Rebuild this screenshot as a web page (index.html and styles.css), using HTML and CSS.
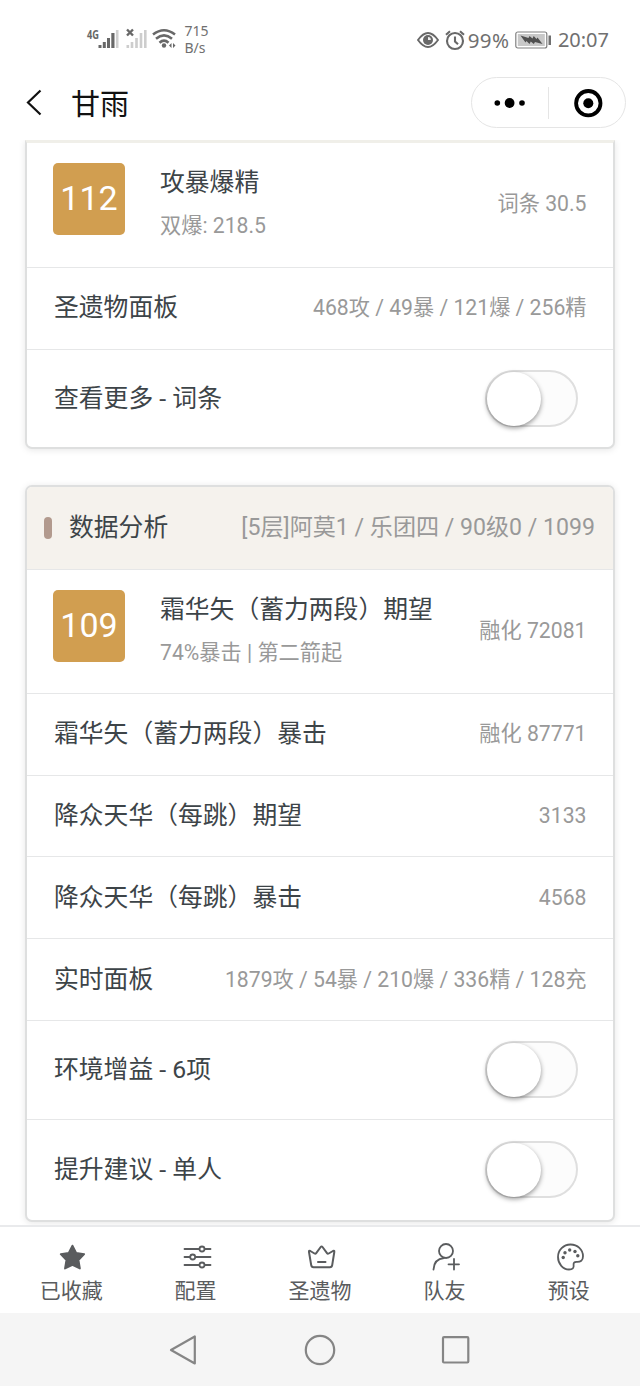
FILE: index.html
```html
<!DOCTYPE html>
<html lang="zh-CN">
<head>
<meta charset="utf-8">
<title>甘雨</title>
<link rel="stylesheet" href="styles.css">
</head>
<body>
<div class="screen">
  <header class="status">
    <svg class="signals" width="92" height="26" viewBox="0 0 92 26">
      <text class="net" x="0" y="11.500" textLength="12" lengthAdjust="spacingAndGlyphs">4G</text>
      <g fill="#686868"><rect x="11.500" y="18" width="3" height="3"/><rect x="15.800" y="15" width="3" height="6"/><rect x="20" y="11" width="3" height="10"/><rect x="24.300" y="6" width="3.200" height="15"/></g>
      <rect x="28.900" y="3" width="2.600" height="18" fill="#d0d0d0"/>
      <g fill="#cdcdcd"><rect x="39.500" y="18" width="2.600" height="3"/><rect x="43.700" y="15" width="2.600" height="6"/><rect x="48.200" y="11" width="2.600" height="10"/><rect x="52.700" y="6" width="2.600" height="15"/><rect x="57" y="3" width="2.600" height="18"/></g>
      <path d="M40 2.500l6 6M46 2.500l-6 6" stroke="#686868" stroke-width="2.400"/>
      <g fill="none" stroke="#686868" stroke-width="2.600"><path d="M66 7.500q11-8.500 22 0"/><path d="M69 11.700q8-6.500 16 0"/><path d="M72.500 15.700q4.500-4 9 0"/></g>
      <circle cx="77" cy="18.500" r="2.200" fill="#686868"/>
      <path d="M84.500 16v5L82 18.500zM86 16v5l2.500-2.500z" fill="#686868"/>
    </svg>
    <div class="speed"><span>715</span><span>B/s</span></div>
    <div class="status-right">
      <svg width="22" height="18" viewBox="0 0 22 18"><path d="M1 9Q11-5 21 9Q11 23 1 9Z" fill="none" stroke="#686868" stroke-width="1.900"/><circle cx="11" cy="9" r="5" fill="#686868"/><path d="M11 9V6A2.800 2.800 0 0 1 13.800 9z" fill="#eee"/></svg>
      <svg class="alarm" width="20" height="21" viewBox="0 0 20 21"><g fill="none" stroke="#686868" stroke-width="2.100"><circle cx="10" cy="11" r="8"/><path d="M10 6.500v5l3 2.800M1 4.800L5 1.300M19 4.800L15 1.300"/></g></svg>
      <span class="percent">99%</span>
      <svg class="battery" width="37" height="18" viewBox="0 0 37 18"><rect x=".8" y="1" width="31" height="16" rx="2" fill="#fff" stroke="#808080" stroke-width="1.200"/><rect x="2.800" y="3" width="27" height="12" fill="#c8c8c8"/><rect x="33.500" y="4.500" width="2.500" height="9.500" fill="#707070"/><path d="M5.500 4.500l8 2.500 1-2 3 2.500 1.200-2.500 2.800 3 1-1.500 5 6.500-7.500-2-1.200 2-3-2.500-1.300 2.500-3-3-1 1.500z" fill="#505050"/></svg>
      <span class="clock">20:07</span>
    </div>
  </header>

  <div class="titlebar">
    <svg width="16" height="28" viewBox="0 0 16 28"><path d="M14.500 1.500L2 13.500l12.500 12" fill="none" stroke="#111" stroke-width="2.200"/></svg>
    <h1>甘雨</h1>
    <div class="capsule">
      <svg width="76" height="50" viewBox="0 0 76 50"><circle cx="25.300" cy="25" r="2.800"/><circle cx="37.600" cy="25" r="4.900"/><circle cx="50" cy="25" r="2.800"/></svg>
      <i class="divider"></i>
      <svg width="76" height="50" viewBox="0 0 76 50"><circle cx="39.300" cy="25.200" r="12.200" fill="none" stroke="#000" stroke-width="3.800"/><circle cx="39.300" cy="25.200" r="5"/></svg>
    </div>
  </div>

  <main class="content">
    <section class="card card-scrolled">
      <div class="row lead">
        <span class="score">112</span>
        <div class="about"><b>攻暴爆精</b><small>双爆: 218.5</small></div>
        <span class="value">词条 30.5</span>
      </div>
      <div class="row"><span class="name">圣遗物面板</span><span class="value">468攻 / 49暴 / 121爆 / 256精</span></div>
      <div class="row tall"><span class="name">查看更多 - 词条</span><span class="switch"></span></div>
    </section>

    <section class="card">
      <div class="row head"><i class="mark"></i><span class="name">数据分析</span><span class="value">[5层]阿莫1 / 乐团四 / 90级0 / 1099</span></div>
      <div class="row lead">
        <span class="score">109</span>
        <div class="about"><b>霜华矢（蓄力两段）期望</b><small>74%暴击 | 第二箭起</small></div>
        <span class="value">融化 72081</span>
      </div>
      <div class="row"><span class="name">霜华矢（蓄力两段）暴击</span><span class="value">融化 87771</span></div>
      <div class="row"><span class="name">降众天华（每跳）期望</span><span class="value">3133</span></div>
      <div class="row"><span class="name">降众天华（每跳）暴击</span><span class="value">4568</span></div>
      <div class="row"><span class="name">实时面板</span><span class="value">1879攻 / 54暴 / 210爆 / 336精 / 128充</span></div>
      <div class="row tall"><span class="name">环境增益 - 6项</span><span class="switch"></span></div>
      <div class="row tall"><span class="name">提升建议 - 单人</span><span class="switch"></span></div>
    </section>
  </main>

  <nav class="tabs">
    <a class="tab"><svg viewBox="0 0 30 30"><path d="M15 2.500l3.900 7.600 8.400 1.300-6 6.200 1.500 8.900L15 22.700l-7.800 3.800 1.500-8.900-6-6.200 8.400-1.300z" fill="#5a5c5e" stroke-width="2" transform="translate(1.200 1.300) scale(.95)"/></svg><span>已收藏</span></a>
    <a class="tab"><svg viewBox="0 0 30 30"><path d="M2.500 7h26M2.500 15h26M2.500 23h26"/><g fill="#fff"><circle cx="20" cy="7" r="2.500"/><circle cx="10.700" cy="15" r="2.500"/><circle cx="20" cy="23" r="2.500"/></g></svg><span>配置</span></a>
    <a class="tab"><svg viewBox="0 0 30 30"><path d="M4.300 9l4.200 2.500q1 .6 1.700-.4L14.700 5q.9-1.200 1.800 0l4.500 6.100q.7 1 1.700.4L27 9q1.600-.8 1.300 1l-2.100 13.200q-.3 2-2.300 2H7.500q-2 0-2.300-2L3 10q-.3-1.800 1.300-1zM12 20h7.500" stroke-width="2"/></svg><span>圣遗物</span></a>
    <a class="tab"><svg viewBox="0 0 30 30"><circle cx="16" cy="9" r="7"/><path d="M3.500 27.500Q4 17 14 16M24 17v10.500M18.500 22.300h10.500"/></svg><span>队友</span></a>
    <a class="tab"><svg viewBox="0 0 30 30"><path d="M15.500 2.500C8.500 2.500 3 8.200 3 15S8 27.500 14 27.500c3.700 0 5-1.500 4.600-4.200-.3-2.700.5-3.500 3.200-3.400 3.700.2 6.200-1.400 6.200-5.700 0-6.700-5.500-11.700-12.500-11.700z"/><g fill="#5a5c5e" stroke="none"><circle cx="8.200" cy="15.500" r="1.700"/><circle cx="10" cy="10.700" r="1.700"/><circle cx="14.700" cy="8" r="1.700"/><circle cx="20" cy="9.500" r="1.700"/><circle cx="22.800" cy="13.700" r="1.700"/></g></svg><span>预设</span></a>
  </nav>

  <footer class="sysnav">
    <svg viewBox="0 0 32 32"><path d="M26.800 2.500v27L3 16z" stroke-linejoin="round"/></svg>
    <svg viewBox="0 0 32 32"><circle cx="16" cy="16" r="14.200"/></svg>
    <svg viewBox="0 0 32 32"><rect x="3" y="3.200" width="25.300" height="25.300" rx="1"/></svg>
  </footer>
</div>
</body>
</html>
```
FILE: styles.css
```css
* { box-sizing: border-box; }
body { margin: 0; background: #fff; }
.screen {
  width: 640px;
  height: 1386px;
  display: flex;
  flex-direction: column;
  overflow: hidden;
  font-family: Roboto, "Noto Sans CJK SC", sans-serif;
  color: #3d4448;
}
svg { display: block; flex: none; }

/* Status bar */
.status {
  height: 78px;
  flex: none;
  display: flex;
  padding: 24px 31px 0 87px;
  font-family: "Noto Sans", sans-serif;
  color: #707070;
}
.signals { margin-top: 3px; overflow: visible; }
.net { font: bold 12px "Noto Sans", sans-serif; fill: #686868; }
.speed {
  display: flex;
  flex-direction: column;
  margin: -1px 0 0 5.500px;
  font-size: 14px;
  line-height: 16.500px;
}
.status-right {
  display: flex;
  align-items: center;
  height: 32px;
  margin-left: auto;
  font-size: 20px;
  line-height: 32px;
}
.alarm { margin-left: 6px; }
.percent { margin-left: 3px; font-size: 20.500px; letter-spacing: .4px; }
.battery { margin: 0 6px 0 5.500px; }

/* Title bar */
.titlebar {
  height: 62px;
  flex: none;
  display: flex;
  align-items: center;
  padding: 0 14px 13px 26px;
}
.titlebar h1 {
  margin: 4px 0 0 29px;
  font-size: 29px;
  line-height: 40px;
  font-weight: 400;
  color: #111;
}
.capsule {
  display: flex;
  align-items: center;
  width: 155px;
  height: 51px;
  margin-left: auto;
  border: 1px solid #e5e5e5;
  border-radius: 26px;
}
.divider { flex: none; width: 1px; height: 32px; background: #e5e5e5; }

/* Cards */
.content { height: 1085px; flex: none; overflow: hidden; padding: 0 25px; }
.card {
  border: 2px solid #dedfdf;
  border-radius: 7px;
  box-shadow: 0 1px 7px rgba(0, 0, 0, .1);
  overflow: hidden;
  background: #fff;
}
.card-scrolled {
  height: 309px;
  margin-bottom: 36px;
  border-top: 3px solid #f0efe9;
  border-radius: 0 0 7px 7px;
}
.row {
  display: flex;
  align-items: center;
  height: 81.800px;
  padding: 0 26.500px 0 27px;
  border-bottom: 1px solid #e6e7e8;
  font-size: 24.800px;
  line-height: 36px;
  white-space: nowrap;
}
.row:last-child { border-bottom: 0; }
.value { margin-left: auto; font-size: 21.200px; color: #999; }
.row.tall { height: 99.500px; }
.row.lead { height: 124.300px; align-items: flex-start; padding-top: 20px; }
.card-scrolled .row.lead { height: 124.800px; }
.lead .value { padding-top: 23px; }
.score {
  width: 72px;
  height: 72px;
  margin-left: -1px;
  border-radius: 5px;
  background: #d19e50;
  color: #fff;
  font-size: 34px;
  line-height: 70px;
  text-align: center;
}
.about { display: flex; flex-direction: column; margin-left: 35px; padding-top: 2px; }
.about b { font-weight: 400; height: 43px; }
.about small { font-size: 21.200px; color: #999; }
.row.head { height: 82.500px; padding: 0 18px 0 17px; background: #f5f2ed; }
.row.head .value { font-size: 23.100px; padding-top: 1px; }
.mark { width: 8px; height: 22px; margin-right: 17px; border-radius: 4px; background: #b29a8e; }
.switch {
  display: flex;
  width: 93px;
  height: 57px;
  margin: 0 8.500px 1px auto;
  border: 2px solid #dfdfdf;
  border-radius: 29px;
  background: #fcfcfc;
}
.tall .name { padding-bottom: 1px; }
.switch::before {
  content: "";
  width: 54px;
  height: 54px;
  margin-top: -.5px;
  border-radius: 50%;
  background: #fff;
  box-shadow: 0 2px 5px rgba(0, 0, 0, .42);
}

/* Bottom tabs */
.tabs {
  height: 88px;
  flex: none;
  display: flex;
  padding: 0 9px;
  border-top: 2px solid #e9eaec;
}
.tab {
  flex: 1;
  display: flex;
  flex-direction: column;
  align-items: center;
  padding-top: 15px;
  font-size: 21px;
  line-height: 38px;
  color: #5a5c5e;
}
.tab svg {
  width: 30px;
  height: 30px;
  margin-left: 2px;
  fill: none;
  stroke: #5a5c5e;
  stroke-width: 1.800;
  stroke-linecap: round;
  stroke-linejoin: round;
}

/* System navigation */
.sysnav {
  flex: 1;
  display: flex;
  justify-content: center;
  gap: 104px;
  padding-top: 20.500px;
  background: #f5f5f5;
}
.sysnav svg { width: 32px; height: 32px; fill: none; stroke: #858585; stroke-width: 2.200; }
```
